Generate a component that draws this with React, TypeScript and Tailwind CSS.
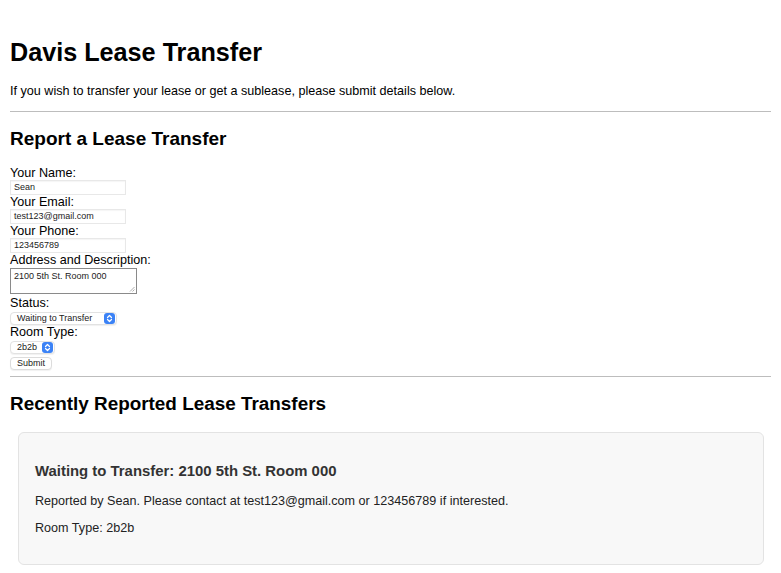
import React from "react";

function Chevrons() {
  return (
    <span className="ml-auto flex h-[11px] w-[11px] items-center justify-center rounded-[3px] bg-[#3b82f6]">
      <svg width="7" height="9" viewBox="0 0 7 9" fill="none">
        <path d="M1.5 3.5 L3.5 1.5 L5.5 3.5" stroke="white" strokeWidth="1.2" strokeLinecap="round" strokeLinejoin="round" />
        <path d="M1.5 5.5 L3.5 7.5 L5.5 5.5" stroke="white" strokeWidth="1.2" strokeLinecap="round" strokeLinejoin="round" />
      </svg>
    </span>
  );
}

function TextField({ value }: { value: string }) {
  return (
    <div className="flex h-[15px] w-[116px] items-center border border-[#e8e8e8] bg-white px-[3px] text-[9px] leading-none text-[#222] shadow-[inset_0_1px_1px_rgba(0,0,0,0.04)]">
      {value}
    </div>
  );
}

function SelectBox({ value, width }: { value: string; width: string }) {
  return (
    <div
      className={`flex h-[13px] items-center rounded-[4px] border border-[#e2e2e2] bg-white pl-[6px] pr-[1px] text-[9px] leading-none text-[#222] shadow-[0_1px_1px_rgba(0,0,0,0.06)] ${width}`}
    >
      <span>{value}</span>
      <Chevrons />
    </div>
  );
}

export default function App() {
  const labelCls = "block text-[12.6px] leading-[14px] text-black";

  return (
    <main className="min-h-screen bg-white px-[10px] pb-[9px] pt-[37px] text-black [font-family:'Liberation_Sans',Arial,sans-serif]">
      {/* Header */}
      <h1 className="text-[25.2px] font-bold leading-[30px]">Davis Lease Transfer</h1>
      <p className="mt-[16px] text-[12.6px] leading-[16px]">
        If you wish to transfer your lease or get a sublease, please submit details below.
      </p>

      <hr className="mt-[12px] border-t border-[#bdbdbd]" />

      {/* Form */}
      <h2 className="mt-[15px] text-[19px] font-bold leading-[24px]">Report a Lease Transfer</h2>

      <form className="mt-[15px] flex flex-col items-start">
        <label className={labelCls}>Your Name:</label>
        <TextField value="Sean" />
        <label className={labelCls}>Your Email:</label>
        <TextField value="test123@gmail.com" />
        <label className={labelCls}>Your Phone:</label>
        <TextField value="123456789" />
        <label className={labelCls}>Address and Description:</label>
        <div className="relative mt-px h-[26px] w-[127px] border border-[#8a8a8a] bg-white px-[3px] pt-[2px] text-[9px] leading-[11px] text-[#222]">
          2100 5th St. Room 000
          <svg className="absolute bottom-[1px] right-[1px]" width="6" height="6" viewBox="0 0 6 6">
            <path d="M5.5 1 L1 5.5 M5.5 3.5 L3.5 5.5" stroke="#999" strokeWidth="0.8" />
          </svg>
        </div>

        <label className={`${labelCls} mt-[2px]`}>Status:</label>
        <div className="mt-[2px]">
          <SelectBox value="Waiting to Transfer" width="w-[107px]" />
        </div>
        <label className={labelCls}>Room Type:</label>
        <div className="mt-[2px]">
          <SelectBox value="2b2b" width="w-[45px]" />
        </div>
        <button
          type="button"
          className="mt-[3px] flex h-[13px] w-[42px] items-center justify-center rounded-[4px] border border-[#dcdcdc] bg-white text-[9px] leading-none text-[#222] shadow-[0_1px_1px_rgba(0,0,0,0.06)]"
        >
          Submit
        </button>
      </form>

      <hr className="mt-[6px] border-t border-[#bdbdbd]" />

      {/* Recent */}
      <h2 className="mt-[15px] text-[18.9px] font-bold leading-[24px]">Recently Reported Lease Transfers</h2>

      <section className="ml-[8px] mr-[7px] mt-[16px] rounded-[6px] border border-[#e3e3e3] bg-[#f8f8f8] px-[16px] pb-[28px] pt-[28px]">
        <h3 className="text-[14.9px] font-bold leading-[20px] text-[#333]">
          Waiting to Transfer: 2100 5th St. Room 000
        </h3>
        <p className="mt-[12px] text-[12.6px] leading-[16px] text-[#222]">
          Reported by Sean. Please contact at test123@gmail.com or 123456789 if interested.
        </p>
        <p className="mt-[11px] text-[12.6px] leading-[16px] text-[#222]">Room Type: 2b2b</p>
      </section>
    </main>
  );
}
